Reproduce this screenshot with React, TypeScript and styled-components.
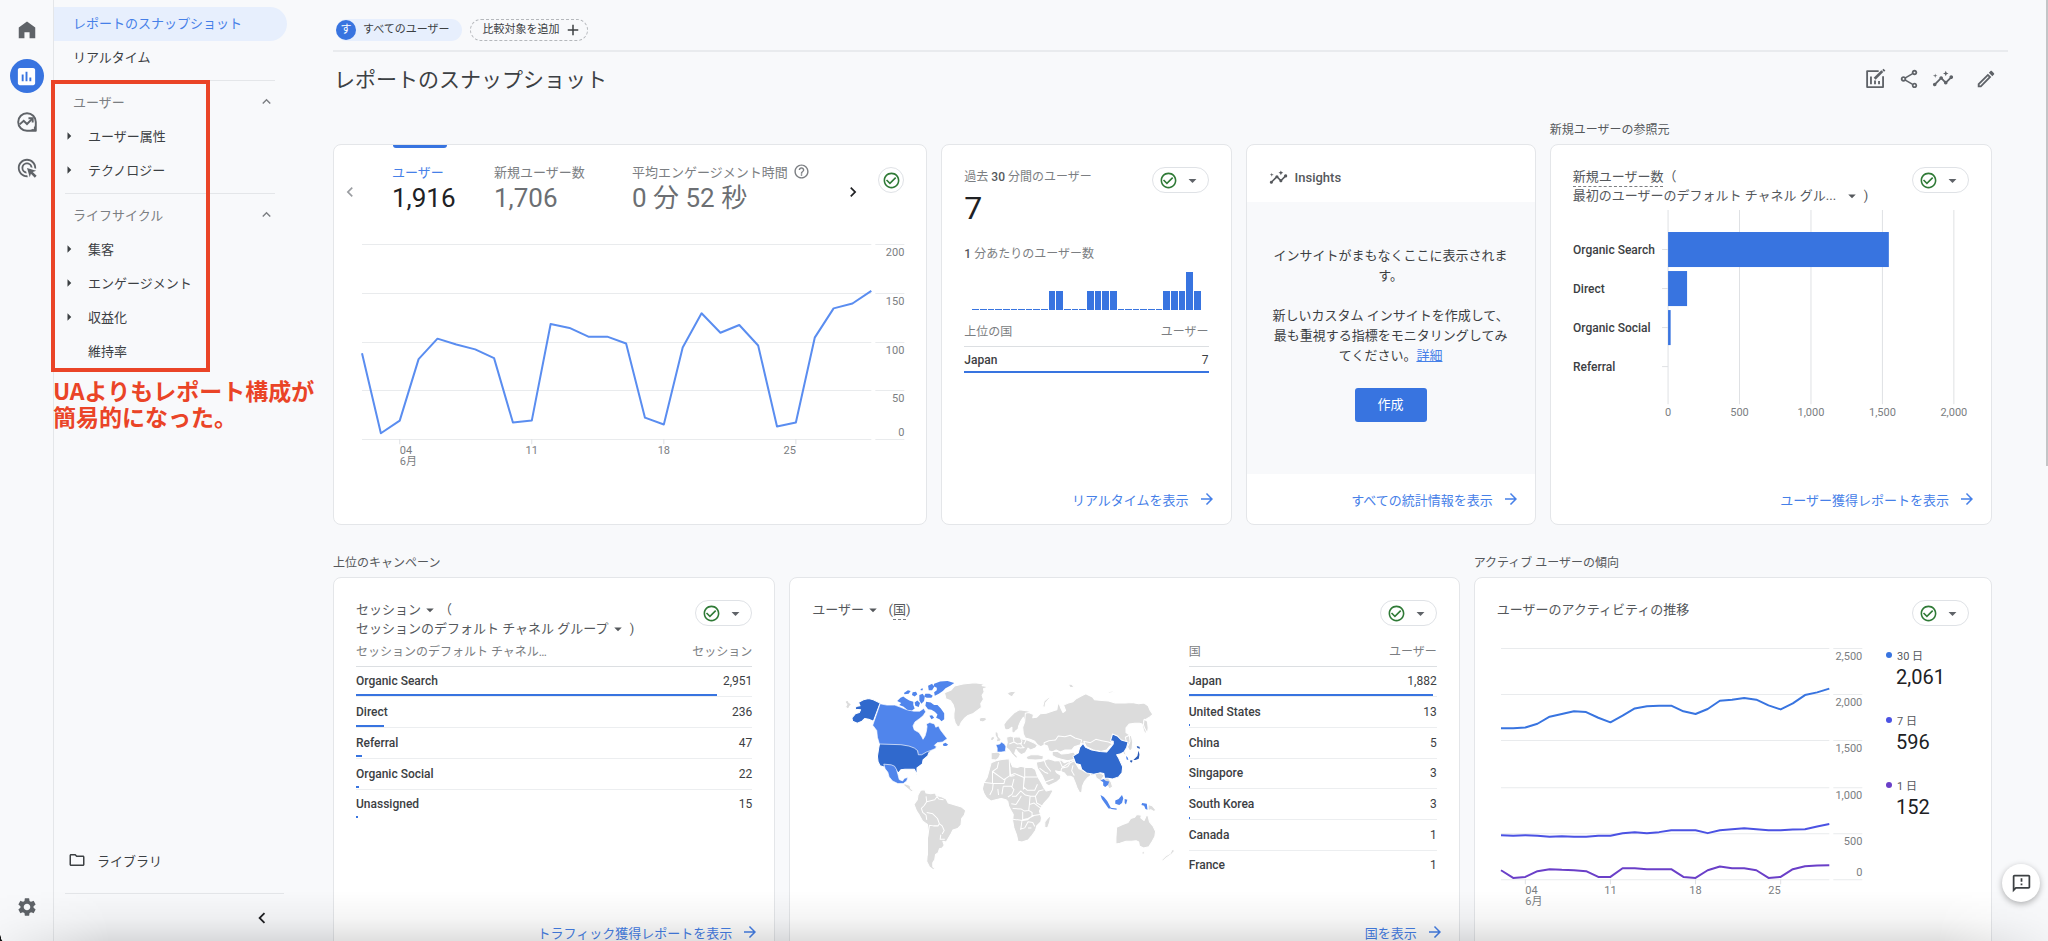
import React from 'react';
import styled, { createGlobalStyle, css } from 'styled-components';
import {
  MdAdsClick,
  MdArrowDropDown,
  MdArrowForward,
  MdArrowRight,
  MdAssessment,
  MdCheckCircleOutline,
  MdHelpOutline,
  MdInsights,
  MdOutlineEdit,
  MdOutlineFeedback,
  MdOutlineFolder,
  MdOutlineShare,
  MdSettings,
  MdAdd,
  MdChevronLeft,
  MdChevronRight,
  MdExpandLess,
} from 'react-icons/md';

const color = {
  page: '#f8f9fb',
  card: '#ffffff',
  line: '#e4e6e9',
  ink: '#202124',
  text: '#3c4043',
  body: '#55585c',
  muted: '#7b7e82',
  blue: '#3874e0',
  link: '#4680e8',
  tint: '#e7effd',
  green: '#2f7a36',
  red: '#ea4427',
};

const GlobalStyle = createGlobalStyle`
  * { box-sizing: border-box; }
  body {
    margin: 0;
    background: ${color.page};
    color: ${color.text};
    font-family: Roboto, "Noto Sans CJK JP", sans-serif;
    font-size: 13px;
    overflow: hidden;
  }
  button {
    margin: 0;
    padding: 0;
    border: 0;
    background: none;
    color: inherit;
    font: inherit;
    cursor: pointer;
  }
  a { color: inherit; text-decoration: none; }
  h1, h2, h3, p, ul { margin: 0; padding: 0; font-weight: 400; }
  ul { list-style: none; }
  svg { display: block; flex: none; }
`;

const Shell = styled.div`
  position: relative;
  display: flex;
  height: 100vh;
`;

/* ---------- icon rail ---------- */

const Rail = styled.nav`
  display: flex;
  flex-direction: column;
  align-items: center;
  gap: 12px;
  width: 54px;
  padding: 13px 0 17px;
  border-right: 1px solid ${color.line};
  color: #5f6368;
`;

const RailButton = styled.button<{ $active?: boolean; $last?: boolean }>`
  display: flex;
  align-items: center;
  justify-content: center;
  width: 34px;
  height: 34px;
  border-radius: 50%;
  ${p => p.$active && css`background: ${color.blue}; color: #fff;`}
  ${p => p.$last && css`margin-top: auto;`}
`;

/* ---------- side navigation ---------- */

const Side = styled.nav`
  position: relative;
  display: flex;
  flex-direction: column;
  width: 279px;
  padding: 7px 0 6px;
`;

const NavLink = styled.a<{ $active?: boolean }>`
  display: flex;
  align-items: center;
  height: 34px;
  width: 233px;
  padding: 0 0 3px 19px;
  border-radius: 0 17px 17px 0;
  ${p => p.$active && css`background: ${color.tint}; color: ${color.link};`}
`;

const NavDivider = styled.hr<{ $wide?: boolean }>`
  width: ${p => (p.$wide ? 219 : 210)}px;
  height: 1px;
  margin: 5px 0 5px 11px;
  border: 0;
  background: ${color.line};
`;

const GroupButton = styled.button`
  display: flex;
  align-items: center;
  justify-content: space-between;
  width: 221px;
  height: 34px;
  padding: 0 0 3px 19px;
  color: ${color.muted};
`;

const SubLink = styled.a`
  display: grid;
  grid-template-columns: 28px auto;
  align-items: center;
  height: 34px;
  padding: 0 0 3px 6px;
`;

const LibraryLink = styled.a`
  display: flex;
  align-items: center;
  gap: 11px;
  height: 34px;
  margin-top: auto;
  margin-bottom: 11px;
  padding-left: 14px;
`;

const CollapseButton = styled.button`
  display: flex;
  align-items: center;
  justify-content: center;
  width: 34px;
  height: 34px;
  margin: 2px 0 0 191px;
  color: ${color.ink};
`;

/* ---------- annotation over the navigation ---------- */

const MarkBox = styled.div`
  position: absolute;
  z-index: 2;
  left: 51px;
  top: 80px;
  width: 159px;
  height: 292px;
  border: 4px solid ${color.red};
  pointer-events: none;
`;

const MarkText = styled.p`
  position: absolute;
  z-index: 2;
  left: 53px;
  top: 377px;
  color: ${color.red};
  font-family: "Noto Sans CJK JP", sans-serif;
  font-size: 23px;
  font-weight: 700;
  line-height: 26px;
  white-space: nowrap;
`;

/* ---------- main column ---------- */

const Main = styled.main`
  flex: 1;
  min-width: 0;
  padding: 19px 56px 24px 0;
  overflow-y: auto;
  scrollbar-width: none;
`;

const ChipBar = styled.div`
  display: flex;
  gap: 8px;
  height: 33px;
  margin-right: -16px;
  padding-left: 3px;
  border-bottom: 2px solid #e9ebee;
`;

const Chip = styled.button`
  display: flex;
  align-items: center;
  gap: 7px;
  height: 22px;
  padding: 0 12px 0 0;
  border-radius: 11px;
  background: ${color.tint};
  color: ${color.text};
  font-size: 11px;
  line-height: 18px;
`;

const Avatar = styled.span`
  display: flex;
  align-items: center;
  justify-content: center;
  width: 20px;
  height: 20px;
  border-radius: 50%;
  background: ${color.blue};
  color: #fff;
`;

const AddChip = styled(Chip)`
  gap: 4px;
  padding: 0 5px 0 12px;
  border: 1px dashed #b5b8bc;
  background: none;
`;

const TitleBar = styled.header`
  display: flex;
  align-items: center;
  justify-content: space-between;
  height: 56px;
  padding-left: 1px;
`;

const Title = styled.h1`
  font-size: 21px;
  line-height: 28px;
`;

const Tools = styled.div`
  display: flex;
  gap: 10px;
  margin-right: -6px;
  padding-bottom: 2px;
  color: #5f6368;
`;

const Tool = styled.button<{ $apart?: boolean }>`
  display: flex;
  align-items: center;
  justify-content: center;
  width: 24px;
  height: 24px;
  margin-left: ${p => (p.$apart ? 9 : 0)}px;
`;

const Board = styled.div`
  display: grid;
  grid-template-columns: repeat(22, minmax(0, 1fr));
  gap: 24px 14px;
  padding-top: 8px;
`;

const Cell = styled.section<{ $span: number }>`
  grid-column: span ${p => p.$span};
  display: flex;
  flex-direction: column;
`;

const CellLabel = styled.h2`
  height: 28px;
  color: ${color.body};
  font-size: 12px;
  line-height: 28px;
`;

const Card = styled.article`
  display: flex;
  flex-direction: column;
  flex: 1;
  min-height: 381px;
  padding: 22px 22px 13px;
  border: 1px solid ${color.line};
  border-radius: 8px;
  background: ${color.card};
`;

const CardHead = styled.div<{ $h: number }>`
  display: flex;
  justify-content: space-between;
  align-items: flex-start;
  height: ${p => p.$h}px;
`;

const CardTitle = styled.h3`
  color: ${color.body};
  font-size: 13px;
  line-height: 19px;
`;

const TitleLine = styled.span`
  display: flex;
  align-items: center;
  height: 19px;
  white-space: pre;
`;

const Dashed = styled.span`
  border-bottom: 1px dashed ${color.muted};
`;

const CaretButton = styled.button`
  display: inline-flex;
  align-items: center;
  justify-content: center;
  width: 18px;
  height: 19px;
`;

const StatusPill = styled.button`
  display: flex;
  align-items: center;
  justify-content: space-between;
  flex: none;
  width: 57px;
  height: 26px;
  padding: 0 6px 0 6px;
  border: 1px solid #dfe2e6;
  border-radius: 13px;
  color: #5f6368;
  background: #fff;
`;

const StatusDot = styled.button`
  display: flex;
  align-items: center;
  justify-content: center;
  width: 26px;
  height: 26px;
  margin-left: auto;
  border: 1px solid #dfe2e6;
  border-radius: 50%;
`;

const FooterLink = styled.a`
  display: flex;
  align-items: center;
  justify-content: flex-end;
  gap: 9px;
  height: 24px;
  margin: auto -7px 0 0;
  color: ${color.link};
`;

/* ---------- overview card ---------- */

const Metrics = styled.div`
  display: flex;
  margin: -22px 0 0 -16px;
  height: 87px;
`;

const Arrow = styled.button<{ $dim?: boolean }>`
  width: 20px;
  height: 20px;
  margin-top: 37px;
  color: ${p => (p.$dim ? '#9a9da1' : color.ink)};
`;

const MetricTabs = styled.div`
  display: grid;
  grid-template-columns: 102px 138px auto;
  flex: 1;
  margin-left: 32px;
  justify-content: start;
`;

const MetricTab = styled.button<{ $active?: boolean }>`
  position: relative;
  display: flex;
  flex-direction: column;
  justify-content: flex-start;
  padding-top: 16px;
  text-align: left;
  white-space: nowrap;
  color: ${p => (p.$active ? color.link : color.muted)};
  ${p => p.$active && css`
    &::before {
      content: '';
      position: absolute;
      top: 0;
      left: 1px;
      width: 54px;
      height: 3px;
      border-radius: 0 0 3px 3px;
      background: ${color.blue};
    }
  `}
`;

const MetricName = styled.span`
  display: flex;
  align-items: center;
  gap: 5px;
  height: 20px;
`;

const MetricValue = styled.span<{ $active?: boolean }>`
  display: block;
  font-size: 26px;
  line-height: 34px;
  color: ${p => (p.$active ? color.ink : '#6c6f73')};
`;

const StatusSlot = styled.div`
  width: 41px;
  padding-top: 22px;
`;

const OverviewPlot = styled.div`
  margin: 12px 0 0 6px;
`;

/* ---------- charts ---------- */

const Plot = styled.svg`
  width: 100%;
  height: auto;
  overflow: visible;
  font-size: 11px;
  fill: ${color.muted};
`;

const RowLabel = styled.text`
  font-size: 12px;
  font-weight: 500;
  fill: ${color.text};
`;

/* ---------- realtime card ---------- */

const Caption = styled.p`
  color: ${color.muted};
  font-size: 12px;
  line-height: 20px;
`;

const Strong = styled.span`
  font-weight: 500;
  color: ${color.body};
`;

const BigNumber = styled.p`
  color: ${color.ink};
  font-size: 32px;
  line-height: 42px;
`;

const Minutes = styled.div`
  display: flex;
  align-items: flex-end;
  gap: 1px;
  height: 40px;
  margin: 6px 8px;
`;

const Minute = styled.span<{ $n: number }>`
  flex: 1;
  height: ${p => (p.$n === 0 ? 1 : p.$n * 19)}px;
  background: ${color.blue};
`;

/* ---------- tables ---------- */

const Table = styled.table<{ $h: number }>`
  width: 100%;
  height: ${p => p.$h}px;
  border-collapse: collapse;
  font-size: 12px;
`;

const Th = styled.th<{ $num?: boolean }>`
  height: 30px;
  padding: 0;
  border-bottom: 1px solid #dcdfe2;
  color: ${color.muted};
  font-weight: 400;
  text-align: ${p => (p.$num ? 'right' : 'left')};
`;

const Row = styled.tr`
  position: relative;
  &:not(:last-child) td { border-bottom: 1px solid #eceef0; }
`;

const Td = styled.td<{ $num?: boolean }>`
  padding: 0;
  font-weight: ${p => (p.$num ? 400 : 500)};
  text-align: ${p => (p.$num ? 'right' : 'left')};
`;

const Meter = styled.span`
  position: absolute;
  left: 0;
  bottom: 1px;
  height: 2px;
  background: ${color.blue};
`;

/* ---------- insights card ---------- */

const InsightsCard = styled(Card)`
  padding: 0;
`;

const InsightsHead = styled.div`
  display: flex;
  align-items: center;
  gap: 7px;
  height: 57px;
  padding: 8px 22px 0;
  color: ${color.body};
  font-weight: 500;
`;

const InsightsBody = styled.div`
  display: flex;
  flex-direction: column;
  align-items: center;
  gap: 20px;
  flex: 1;
  padding: 44px 22px 0;
  background: ${color.page};
  line-height: 20px;
  text-align: center;
`;

const InlineLink = styled.a`
  color: ${color.link};
  text-decoration: underline;
`;

const Primary = styled.button`
  width: 72px;
  height: 34px;
  margin-top: 2px;
  border-radius: 3px;
  background: ${color.blue};
  color: #fff;
`;

const InsightsFoot = styled.div`
  display: flex;
  height: 50px;
  padding: 0 22px 13px;
`;

const InsightsLink = styled(FooterLink)`
  margin-left: auto;
`;

/* ---------- map and trend cards ---------- */

const Split = styled.div`
  display: flex;
`;

const MapPane = styled.div`
  flex: 1;
  min-width: 0;
`;

const TablePane = styled.div`
  flex: none;
  width: 248px;
`;

const TrendPane = styled.div`
  flex: 1;
  min-width: 0;
  margin: 0 24px 0 4px;
`;

const Legend = styled.ul`
  flex: none;
  width: 83px;
  margin-top: -3px;
`;

const LegendItem = styled.li`
  height: 65px;
`;

const LegendName = styled.span<{ $c: string }>`
  display: flex;
  align-items: center;
  gap: 5px;
  height: 20px;
  color: ${color.body};
  font-size: 11px;
  &::before {
    content: '';
    width: 6px;
    height: 6px;
    border-radius: 50%;
    background: ${p => p.$c};
  }
`;

const LegendValue = styled.span`
  display: block;
  padding-left: 10px;
  color: ${color.ink};
  font-size: 20px;
  line-height: 24px;
`;

/* ---------- overlays ---------- */

const FeedbackButton = styled.button`
  position: absolute;
  z-index: 3;
  right: 8px;
  bottom: 39px;
  display: flex;
  align-items: center;
  justify-content: center;
  width: 38px;
  height: 38px;
  border-radius: 50%;
  background: #fff;
  color: ${color.text};
  box-shadow: 0 2px 6px rgba(0, 0, 0, 0.3);
`;

const ScrollThumb = styled.span`
  position: absolute;
  z-index: 3;
  right: 0;
  top: 0;
  width: 2px;
  height: 466px;
  background: #c4c5c7;
`;

const BottomShade = styled.div`
  position: absolute;
  z-index: 2;
  left: 0;
  right: 0;
  bottom: 0;
  height: 50px;
  background: linear-gradient(to bottom, rgba(0, 0, 0, 0), rgba(0, 0, 0, 0.04) 55%, rgba(0, 0, 0, 0.12));
  mask-image: linear-gradient(to right, rgba(0, 0, 0, 0.2), #000 110px, #000 calc(100% - 110px), rgba(0, 0, 0, 0.2));
  pointer-events: none;
`;

const WindowCorner = styled.div`
  position: absolute;
  z-index: 3;
  left: 0;
  bottom: 0;
  width: 3px;
  height: 12px;
  background: radial-gradient(ellipse at 100% 0, rgba(0, 0, 0, 0) 68%, #111 76%);
  pointer-events: none;
`;

/* ---------- drawn icons ---------- */

const HomeIcon = () => (
  <svg width="22" height="22" viewBox="0 0 24 24" fill="currentColor">
    <path d="M12 2.6 3 9.3V21h6.2v-6.6h5.6V21H21V9.3z" />
  </svg>
);

const ExploreIcon = () => (
  <svg width="22" height="22" viewBox="0 0 24 24" fill="none" stroke="currentColor" strokeWidth="2.1">
    <path d="M21.6 12A9.6 9.6 0 1 0 12 21.6h9.6z" strokeLinejoin="round" />
    <path d="M4 14.6l4.4-4 3.6 3.6 5.6-5.6" />
    <path d="M13.6 8h4.6v4.6" />
    <path d="M15 21a9.4 9.4 0 0 0 6-6v6z" fill="currentColor" stroke="none" />
    <circle cx="18.6" cy="18.8" r="1" fill="#f8f9fb" stroke="none" />
  </svg>
);

const EditChartIcon = () => (
  <svg width="22" height="22" viewBox="0 0 24 24" fill="none" stroke="currentColor" strokeWidth="2">
    <path d="M16 3.4H3.4v17.4h17.4V9" strokeLinejoin="round" />
    <path d="M7.6 17.6V9.4M12 17.6v-4M16.4 17.6v-3.4" />
    <path d="M11.6 11.8l8.4-8.4" strokeWidth="3" />
    <path d="M20.6 1.4l2 2" strokeWidth="2" />
  </svg>
);

/* ---------- data ---------- */

const userGroup = ['ユーザー属性', 'テクノロジー'];
const lifecycleGroup = [
  { name: '集客', open: true },
  { name: 'エンゲージメント', open: true },
  { name: '収益化', open: true },
  { name: '維持率', open: false },
];

const dailyUsers = [
  88, 6, 19, 82, 103, 97, 92, 83, 17, 19, 118, 114, 105, 105, 98, 22, 15, 94, 129, 109, 117, 96, 13, 17, 104, 134, 139,
  152,
];

const minutes = [
  0, 0, 0, 0, 0, 0, 0, 0, 0, 0, 1, 1, 0, 0, 0, 1, 1, 1, 1, 0, 0, 0, 0, 0, 0, 1, 1, 1, 2, 1,
];

const trend = [
  {
    stroke: '#3874e0',
    name: '30 日',
    total: '2,061',
    values: [
      1631, 1631, 1641, 1681, 1757, 1786, 1815, 1807, 1746, 1696, 1768, 1847, 1869, 1876, 1876, 1815, 1786, 1840, 1930,
      1941, 1959, 1941, 1880, 1836, 1901, 1991, 2020, 2061,
    ],
  },
  {
    stroke: '#4b52e3',
    name: '7 日',
    total: '596',
    values: [
      476, 469, 476, 469, 458, 465, 458, 458, 469, 469, 498, 509, 498, 509, 530, 530, 530, 498, 530, 541, 552, 541, 530,
      530, 538, 541, 570, 596,
    ],
  },
  {
    stroke: '#6a3fc8',
    name: '1 日',
    total: '152',
    values: [
      97, 14, 25, 87, 108, 101, 97, 87, 25, 25, 119, 119, 108, 108, 108, 25, 14, 97, 137, 119, 119, 97, 14, 25, 108,
      141, 148, 152,
    ],
  },
];

const channels = [
  { name: 'Organic Search', users: 1545 },
  { name: 'Direct', users: 133 },
  { name: 'Organic Social', users: 18 },
  { name: 'Referral', users: 0 },
];

type Entry = { name: string; value: string; share: number };

const sessions: Entry[] = [
  { name: 'Organic Search', value: '2,951', share: 91 },
  { name: 'Direct', value: '236', share: 7 },
  { name: 'Referral', value: '47', share: 1.5 },
  { name: 'Organic Social', value: '22', share: 0.7 },
  { name: 'Unassigned', value: '15', share: 0.5 },
];

const countries: Entry[] = [
  { name: 'Japan', value: '1,882', share: 98.5 },
  { name: 'United States', value: '13', share: 0.7 },
  { name: 'China', value: '5', share: 0.3 },
  { name: 'Singapore', value: '3', share: 0.2 },
  { name: 'South Korea', value: '3', share: 0.2 },
  { name: 'Canada', value: '1', share: 0 },
  { name: 'France', value: '1', share: 0 },
];

/* ---------- shared parts ---------- */

const Status = () => (
  <StatusPill aria-label="データ品質">
    <MdCheckCircleOutline size={19} color={color.green} />
    <MdArrowDropDown size={19} />
  </StatusPill>
);

const Caret = ({ label }: { label: string }) => (
  <CaretButton aria-label={label}>
    <MdArrowDropDown size={18} />
  </CaretButton>
);

const More = ({ children }: { children: string }) => (
  <FooterLink href="#">
    {children}
    <MdArrowForward size={18} />
  </FooterLink>
);

const DataTable = ({ head, rows, height }: { head: [string, string]; rows: Entry[]; height: number }) => (
  <Table $h={height}>
    <thead>
      <tr>
        <Th>{head[0]}</Th>
        <Th $num>{head[1]}</Th>
      </tr>
    </thead>
    <tbody>
      {rows.map(r => (
        <Row key={r.name}>
          <Td>
            {r.name}
            <Meter style={{ width: `${r.share}%` }} />
          </Td>
          <Td $num>{r.value}</Td>
        </Row>
      ))}
    </tbody>
  </Table>
);

type LineChartProps = {
  width: number;
  height: number;
  plotWidth: number;
  max: number;
  step: number;
  labels: string[];
  series: { stroke: string; values: number[] }[];
};

const LineChart = ({ width, height, plotWidth, max, step, labels, series }: LineChartProps) => {
  const x = (i: number) => (i * plotWidth) / 27;
  const y = (v: number) => height - (v / max) * height;
  const days = [
    { i: 2, text: '04', anchor: 'start' as const },
    { i: 9, text: '11', anchor: 'middle' as const },
    { i: 16, text: '18', anchor: 'middle' as const },
    { i: 23, text: '25', anchor: 'end' as const },
  ];
  return (
    <Plot viewBox={`0 0 ${width} ${height + 28}`}>
      {labels.map((label, n) => {
        const ly = Math.round(y(n * step)) + 0.5;
        return (
          <g key={label}>
            <path d={`M0 ${ly}H${plotWidth}M${plotWidth + 4} ${ly}H${width}`} stroke="#e9ebed" />
            <text x={width} y={n === 0 ? ly - 4 : ly + 11} textAnchor="end">
              {label}
            </text>
          </g>
        );
      })}
      {days.map(d => (
        <g key={d.text}>
          <path d={`M${x(d.i)} ${height}v5`} stroke="#dfe1e4" />
          <text x={x(d.i)} y={height + 15} textAnchor={d.anchor}>
            {d.text}
          </text>
        </g>
      ))}
      <text x={x(2)} y={height + 26}>
        6月
      </text>
      {series.map(s => (
        <polyline
          key={s.stroke}
          fill="none"
          stroke={s.stroke}
          strokeWidth="2"
          strokeLinejoin="round"
          points={s.values.map((v, i) => `${x(i)},${y(v)}`).join(' ')}
        />
      ))}
    </Plot>
  );
};

const ChannelChart = () => {
  const x0 = 95;
  const unit = 71.4 / 500;
  return (
    <Plot viewBox="0 0 396 216">
      {[0, 500, 1000, 1500, 2000].map(v => (
        <g key={v}>
          <path d={`M${x0 + v * unit} 0V194`} stroke="#dfe1e4" />
          <text x={x0 + v * unit} y="206" textAnchor="middle">
            {v.toLocaleString('en-US')}
          </text>
        </g>
      ))}
      {channels.map((c, i) => (
        <g key={c.name}>
          <path d={`M${x0 - 6} ${39.5 + i * 39}h6`} stroke="#dfe1e4" />
          <RowLabel x="0" y={44 + i * 39}>
            {c.name}
          </RowLabel>
          <rect x={x0} y={22 + i * 39} width={c.users * unit} height="35" fill={color.blue} />
        </g>
      ))}
    </Plot>
  );
};

const WorldMap = () => (
  <Plot viewBox="102 264 1122 732" strokeLinejoin="round">
    <g fill="#dcdcdc" stroke="#fff" strokeWidth="3">
      {/* Greenland, Iceland, Svalbard */}
      <path d="M497 433l20-8 10-12 25-6 35-4 28 4-6 5 20 3-16 6 2 10-6 10 4 12-8 12 2 12-14 10-10 8-16 6-10 8-10 12-6 14-6-2-6-10-4-14 0-14 2-12-4-14-8-12-14-6z" />
      <path d="M600 510l8-4 12 2 2 6-10 6-10-2z" />
      <path d="M684 433l14-4 12 2-6 6-6 9-10-6z" />
      <path d="M200 460l8-6 4 8 8 6-6 6-4 8-8-6 4-8z" />
      {/* Central America and the Caribbean */}
      <path d="M376 704l8 2 10 4 2 8 8 8-6 2-10-8-12-10z" />
      {/* South America */}
      <path d="M406 766l10-14 2-14 8-14 12-2 4 10 14 2 12-2 8 8 14 4 12 6 6 12 20 6 20 6 12 10-4 14-8 10-2 20-10 10-14 4-6 12-8 14-6 10-10-2 4 12-6 8-8 2-4 12-8 6-2 14-6 10 0 12 8 6-8 2-10-8-8-16 2-30 0-36 2-24-2-20-14-10-10-18-8-12z" />
      <path d="M444 758l-8 12-8 8 4 12 10 8 2 14M444 758l-2-16M444 758l24-6 8-12M470 736l10 14 14 2M444 790l18 4 14 14 6 16 8 6 6 14-6 10M452 828l12 2 14 0 4-8M452 828l-6 40 0 50M486 856l-2 14 14 0" fill="none" />
      {/* Scandinavia, British Isles, Iberia, central Europe */}
      <path d="M676 540l-2-12 8-12 12-12 12-12 14-8 16 2 14 2-2 12 4 14-4 12-10 4-2-14-4-10-8 12-6 14-2 10-6 4-6 8-6-4 0-14-8 6-8 2z" />
      <path d="M648 548l8 4 2 12 8 8-4 6-12 2 4-10-6-10zM636 566l8-4 2 8-6 6-6-2z" />
      <path d="M636 612l22-2 6 6-6 12-8 6-14-2z" />
      <path d="M682 566l12-4 10 4 16-2 10 8 14 2 22 10 8 6-6 8-14 6-8-6-8 14-12 6-8-6-8-10-4 12 10 12-6 2-12-12-10-14-8-6 4-14z" />
      <path d="M702 566l2 14 10 6 14-2M704 580l-14 6M722 564l6 14-4 8 10 12M740 574l-6 12M712 596l12 2 12-2" fill="none" />
      {/* Turkey and the Middle East */}
      <path d="M740 624l14-6 22 0 16 4-2 10-22 2-24-2z" />
      <path d="M770 640l22-4 14-6 20 6 20-2 8 8 16-6 16-4 4 10-8 14-14 14-18-2-14 0-8-2 4 6 12 8-2 10-12 10-22 10-8-4-12-26-14-22z" />
      <path d="M794 634l6 16 14 18M824 636l16 0 8 18 10 14M848 656l20-14 4-8M780 658l16 12 10 4M796 700l26-10" fill="none" />
      {/* Russia */}
      <path d="M738 494l10-2 14 6-2 10 12-2 10-10 18-2 24-8 8-2 2-14 4-6 6 16 6 12 8-6-6-16 14-6 14-4 8-8 18-10 12-6 20 10 6 8 22 2 20 2 20 6 30 0 20-2 20 4 16-2 12 8 6 14 8 12-10 8-10 6-8 6 6 12 4 12-4 16-6-14-4-18-8-2-14 0-16 2-10 12 0 14 16 10 4 18-2 20-6 8-8-14-10-12-12-8-12-4-4 12-8-4-10 14-14-2-20 0-18-4-22-2-20 2-16-10-20-6-16 6-14-2-6 10-20 2-16 8-10-6-8-10-14-6-14-4-6-12-2-20 6-16z" />
      <path d="M790 474l4-16 12-10 14-6-12 10-10 12-2 14z" />
      <path d="M866 408l10 0 8 8-12 2zM984 430l14-2 6 4-16 2z" />
      {/* Central Asia, Mongolia */}
      <path d="M794 582l14-6 20-2 8-12 20 2 16-4 14 8 20 6-4 14-18 6-8 10-20 0-14 6-12-6-12 6-10-4-4-14-10-4z" />
      <path d="M818 608l16 0 12 8 18-2 18-4 8 10-8 12-18 4-16-4-16-4-14-8z" />
      <path d="M912 578l20 4 16-10 18 4 20 4 12 6-10 8-8 10-16 4-24-4-20-10z" />
      {/* South Asia */}
      <path d="M846 658l18-4 8-12 12-6 6 10 8 14 18 6 14 2 16-2-4 12-10 2-10 8-8 10-6 14-2 18-6 2-8-16-6-16-6-14-8-4-10 0-8-10-10-4z" />
      <path d="M880 650l-4 16 8 14M932 680l0-14" fill="none" />
      <path d="M946 664l12-6 4 14 12 8-8 10 0 16-6-12-10-6-6-14z" />
      <path d="M976 686l8 0 10 14 4 14-10 6-6-12-8-10z" />
      <path d="M1036 566l12-6 2 18-6 14-4-10z" />
      <path d="M1026 610l10-6 0 8 4 8-6-2z" />
      <path d="M1092 512l10 6 2 20-2 16-8-14-4-12z" />
      {/* Africa */}
      <path d="M636 642l14-6 18-4 22-2 4 10 6 14 14 2 10-4 16 4 18 0 10 6 6 20 12 20 8 16 6 8 16-4 4 4-10 18-16 18-10 14-4 10 6 20-2 12-12 12-4 14-10 14-12 14-18 6-12-2-4-18-8-22-4-22 2-18-8-14-6-12-2-12-6-6-14-4-16 4-14 4-14-10-8-14-4-12 4-18 10-16z" />
      <path d="M814 798l-4 22-6 16-8-2 0-16 8-10z" />
      <path d="M658 640l-4 18-14 10 0 36M640 668l34 24 18-12-2-48M692 680l14-6M692 654l2 28 12-2M706 674l28 12-2 36M736 656v28h38M736 684l-4 30 12 10 22 0 8-18M610 700l32 4 32 0 4-14M642 704l-2 18-8 16M656 720l2 18M672 712l-4 24M672 712l24 0 8 10-6 14-12 8M704 690l-6 24M698 742l12 0 14-16 14 12 16 4 14 0 10-16 14-4M696 764l14 2 8-12 8-14M752 742l-2 24-2 18-12 2-10-6-26-2M768 742l4 20 18 10M750 766l14-4 20 16M748 784l10 6 0 12-12 6-16 4 0-24M700 810l30 4 14-2 14-12 24-4M728 814l-4 28M722 840l14-4 10-18 14 2 6 12M758 802l10-4M746 836l10 0" fill="none" />
      {/* Oceania */}
      <path d="M1010 834l18-8 16-6 8-12 12-4 6-8 14 2-2 8 10 8 8-18 4 6 4 16 10 12 8 16-2 16-10 18-8 12-16 4-12-6-2-12-8-4-14 2-16 0-18 6-12 2 0-18z" />
      <path d="M1086 906l8 2-4 8-4-2z" />
      <path d="M1176 900l8 4-10 10-14 10-12 10-6 0 14-14 14-8z" />
      <path d="M1104 766l12 4 10 12-4 6-10-6-8 2z" />
    </g>
    <g fill="#3069cd" stroke="#fff" strokeWidth="3">
      {/* Alaska, contiguous United States, China */}
      <path d="M241 462l14-8 16-4 14 4 20 10-20 54-14-6-12-2-8 8-14 6-14-6-2-10 10-12 12-4 4-8-16-2 2-8 12-2z" />
      <path d="M305 577l60 2 24 2 14 6 14 8 2 16 18-4 14-8 12-8 2 10-14 10-4 10-14 12-2 12-16 12 0 22-4-10-4-8-16 0-12 0-12 2-8 10-8-12-16-4-16-2-14-4-6-12-2-16 4-26z" />
      <path d="M880 622l16-10 4-16 10-12 8 12 18 8 24 4 20 2 12-14 8-10 0-8-8-2 6-20 14 6 12 12 20 6-4 16-8 14-12 6-10 2 6 10 12 26-2 18-10 12-18 6-14-2-10 0-2-14-12-2-18 4-22-4-14-10-4-14-14-4z" />
    </g>
    <g fill="#5085ec" stroke="#fff" strokeWidth="2">
      {/* Canada, Mexico, France */}
      <path d="M305 466l20 4 24 0 16 6 20 8 20 4 18 0 12-8 6 10-8 12-10 8-14 10-6 12 4 12 14 8 8 12 4 8 6-10 4-14 2-14-2-8 10-4 14 4 4 10 8-4 6 12 12 16 8 10-14 10-16 2-8 8 6 4-4 6-10 4-16 6-14 8-10 0-2-12-10-8-16-6-24-4-64-2-6-20-2-20-12-16z" />
      <path d="M316 646l22 2 10 4 6 10 4 14 4 16 10 4 6-8 10-2-4 10-10 8-16 0-16-8-10-12-4-14-8-10z" />
      <path d="M650 588l12-2 4-6 10 6 4 8-2 14-12 2-12 0 0-12z" />
    </g>
    <g fill="#5085ec">
      {/* Arctic islands and Newfoundland */}
      <path d="M356 458l10-10 8-4 8 6 10 6 12 4 0 10 4 10-8 6-14-2-12-10-12-4 6-6z" />
      <path d="M376 434l12-8 8 2-6 8-12 2zM402 432l10-2 4 8-8 6-8-4zM422 440l10-4 6 10-2 12-8 8-6-10zM408 462l8-6 8 8-4 12-10-4zM426 422l6-2 0 6-6 0z" />
      <path d="M442 460l14 2 10 8 10 0 10 10 10 14 0 18-8 6-6-6-10-4 4-10-8-8-10-6-10-2-8-10z" />
      <path d="M448 412l12-6 6 10-6 10-10 0zM466 406l18-6 22-2 20 6-12 8-14 8-8 8-12 8-12 6-2-10 8-6 0-8-10-4zM440 436l12 0 10 6-4 6-14 0-8-4z" />
      <path d="M492 586l8-4 8 6-6 4-8 0zM452 502l8-2 6 8-8 4z" />
      {/* South-east Asia */}
      <path d="M962 694l10-4 6 6 10 2-4 10-8 6-6-4 0-10zM962 738l10 6 10 12 12 22-8 0-10-14-10-14zM1006 754l10-4 10-12 4 10-4 14-8 6-12-4zM1086 762l14 2 2 18-6-2-4-10-8-2z" />
      <path d="M992 776l18 2 0 4-16-2zM1034 750l8 2-4 14-4-4zM1038 622l5 4 2 8-5-2z" />
    </g>
    <g fill="#2b5cb8">
      {/* Japan */}
      <path d="M1070 592l8 2 2 6-8-2zM1076 606l2 12-2 12-10 4-6 0 6-6 6-6 2-10zM1052 634l6 2-4 6-4-4z" />
    </g>
  </Plot>
);

/* ---------- page ---------- */

const App = () => (
  <>
    <GlobalStyle />
    <Shell>
      <Rail aria-label="メイン">
        <RailButton aria-label="ホーム"><HomeIcon /></RailButton>
        <RailButton $active aria-label="レポート"><MdAssessment size={23} /></RailButton>
        <RailButton aria-label="探索"><ExploreIcon /></RailButton>
        <RailButton aria-label="広告"><MdAdsClick size={22} /></RailButton>
        <RailButton $last aria-label="管理"><MdSettings size={22} /></RailButton>
      </Rail>

      <Side aria-label="レポート">
        <NavLink $active href="#">レポートのスナップショット</NavLink>
        <NavLink href="#">リアルタイム</NavLink>
        <NavDivider />
        <GroupButton>ユーザー<MdExpandLess size={17} /></GroupButton>
        {userGroup.map(name => (
          <SubLink key={name} href="#">
            <MdArrowRight size={18} />
            {name}
          </SubLink>
        ))}
        <NavDivider />
        <GroupButton>ライフサイクル<MdExpandLess size={17} /></GroupButton>
        {lifecycleGroup.map(item => (
          <SubLink key={item.name} href="#">
            {item.open ? <MdArrowRight size={18} /> : <span />}
            {item.name}
          </SubLink>
        ))}
        <LibraryLink href="#"><MdOutlineFolder size={18} />ライブラリ</LibraryLink>
        <NavDivider $wide />
        <CollapseButton aria-label="メニューを閉じる"><MdChevronLeft size={22} /></CollapseButton>
      </Side>

      <Main>
        <ChipBar>
          <Chip><Avatar>す</Avatar>すべてのユーザー</Chip>
          <AddChip>比較対象を追加<MdAdd size={18} /></AddChip>
        </ChipBar>
        <TitleBar>
          <Title>レポートのスナップショット</Title>
          <Tools>
            <Tool aria-label="比較を編集"><EditChartIcon /></Tool>
            <Tool aria-label="共有"><MdOutlineShare size={22} /></Tool>
            <Tool aria-label="インサイト"><MdInsights size={22} /></Tool>
            <Tool $apart aria-label="編集"><MdOutlineEdit size={22} /></Tool>
          </Tools>
        </TitleBar>

        <Board>
          <Cell $span={8}>
            <CellLabel />
            <Card>
              <Metrics>
                <Arrow $dim aria-label="前へ"><MdChevronLeft size={20} /></Arrow>
                <MetricTabs>
                  <MetricTab $active>
                    <MetricName>ユーザー</MetricName>
                    <MetricValue $active>1,916</MetricValue>
                  </MetricTab>
                  <MetricTab>
                    <MetricName>新規ユーザー数</MetricName>
                    <MetricValue>1,706</MetricValue>
                  </MetricTab>
                  <MetricTab>
                    <MetricName>平均エンゲージメント時間<MdHelpOutline size={17} /></MetricName>
                    <MetricValue>0 分 52 秒</MetricValue>
                  </MetricTab>
                </MetricTabs>
                <Arrow aria-label="次へ"><MdChevronRight size={20} /></Arrow>
                <StatusSlot>
                  <StatusDot aria-label="データ品質"><MdCheckCircleOutline size={19} color={color.green} /></StatusDot>
                </StatusSlot>
              </Metrics>
              <OverviewPlot>
                <LineChart
                  width={542}
                  height={195}
                  plotWidth={509}
                  max={200}
                  step={50}
                  labels={['0', '50', '100', '150', '200']}
                  series={[{ stroke: '#5a8df0', values: dailyUsers }]}
                />
              </OverviewPlot>
            </Card>
          </Cell>

          <Cell $span={4}>
            <CellLabel />
            <Card>
              <CardHead $h={77}>
                <div>
                  <Caption>過去 <Strong>30</Strong> 分間のユーザー</Caption>
                  <BigNumber>7</BigNumber>
                </div>
                <Status />
              </CardHead>
              <Caption><Strong>1</Strong> 分あたりのユーザー数</Caption>
              <Minutes>
                {minutes.map((n, i) => <Minute key={i} $n={n} />)}
              </Minutes>
              <DataTable head={['上位の国', 'ユーザー']} rows={[{ name: 'Japan', value: '7', share: 100 }]} height={58} />
              <More>リアルタイムを表示</More>
            </Card>
          </Cell>

          <Cell $span={4}>
            <CellLabel />
            <InsightsCard>
              <InsightsHead><MdInsights size={19} />Insights</InsightsHead>
              <InsightsBody>
                <p>インサイトがまもなくここに表示されます。</p>
                <p>
                  新しいカスタム インサイトを作成して、最も重視する指標をモニタリングしてみてください。
                  <InlineLink href="#">詳細</InlineLink>
                </p>
                <Primary>作成</Primary>
              </InsightsBody>
              <InsightsFoot>
                <InsightsLink href="#">すべての統計情報を表示<MdArrowForward size={18} /></InsightsLink>
              </InsightsFoot>
            </InsightsCard>
          </Cell>

          <Cell $span={6}>
            <CellLabel>新規ユーザーの参照元</CellLabel>
            <Card>
              <CardHead $h={43}>
                <CardTitle>
                  <TitleLine><Dashed>新規ユーザー数</Dashed>（</TitleLine>
                  <TitleLine>最初のユーザーのデフォルト チャネル グル...  <Caret label="ディメンションを選択" /> )</TitleLine>
                </CardTitle>
                <Status />
              </CardHead>
              <ChannelChart />
              <More>ユーザー獲得レポートを表示</More>
            </Card>
          </Cell>

          <Cell $span={6}>
            <CellLabel>上位のキャンペーン</CellLabel>
            <Card>
              <CardHead $h={36}>
                <CardTitle>
                  <TitleLine>セッション<Caret label="指標を選択" />（</TitleLine>
                  <TitleLine>セッションのデフォルト チャネル グループ<Caret label="ディメンションを選択" /> )</TitleLine>
                </CardTitle>
                <Status />
              </CardHead>
              <DataTable head={['セッションのデフォルト チャネル…', 'セッション']} rows={sessions} height={183} />
              <More>トラフィック獲得レポートを表示</More>
            </Card>
          </Cell>

          <Cell $span={9}>
            <CellLabel />
            <Card>
              <CardHead $h={36}>
                <CardTitle>
                  <TitleLine>ユーザー<Caret label="指標を選択" />  (<Dashed>国</Dashed>)</TitleLine>
                </CardTitle>
                <Status />
              </CardHead>
              <Split>
                <MapPane><WorldMap /></MapPane>
                <TablePane><DataTable head={['国', 'ユーザー']} rows={countries} height={244} /></TablePane>
              </Split>
              <More>国を表示</More>
            </Card>
          </Cell>

          <Cell $span={7}>
            <CellLabel>アクティブ ユーザーの傾向</CellLabel>
            <Card>
              <CardHead $h={48}>
                <CardTitle>ユーザーのアクティビティの推移</CardTitle>
                <Status />
              </CardHead>
              <Split>
                <TrendPane>
                  <LineChart
                    width={361}
                    height={231}
                    plotWidth={328}
                    max={2500}
                    step={500}
                    labels={['0', '500', '1,000', '1,500', '2,000', '2,500']}
                    series={trend}
                  />
                </TrendPane>
                <Legend>
                  {trend.map(s => (
                    <LegendItem key={s.name}>
                      <LegendName $c={s.stroke}>{s.name}</LegendName>
                      <LegendValue>{s.total}</LegendValue>
                    </LegendItem>
                  ))}
                </Legend>
              </Split>
            </Card>
          </Cell>
        </Board>
      </Main>

      <MarkBox />
      <MarkText>UAよりもレポート構成が<br />簡易的になった。</MarkText>
      <ScrollThumb />
      <FeedbackButton aria-label="フィードバック"><MdOutlineFeedback size={21} /></FeedbackButton>
      <BottomShade />
      <WindowCorner />
    </Shell>
  </>
);

export default App;
